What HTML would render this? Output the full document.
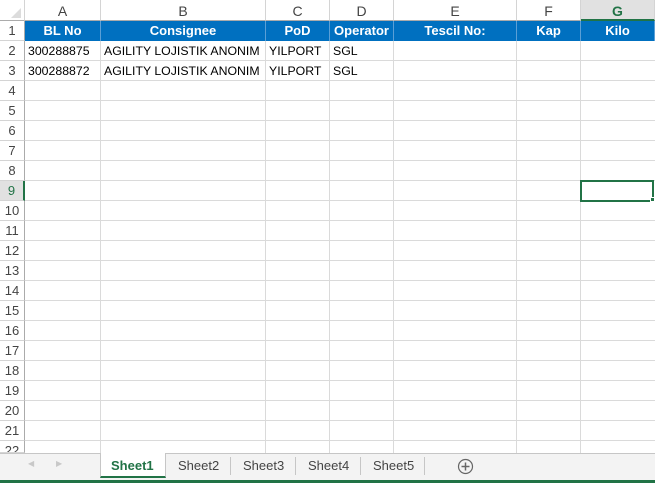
<!DOCTYPE html><html><head><style>
body{margin:0;width:655px;height:483px;overflow:hidden;background:#fff;font-family:"Liberation Sans",Arial,sans-serif;position:relative}
.a{position:absolute;box-sizing:border-box}
.ch{top:0;height:21px;background:#fff;border-right:1px solid #d4d4d4;border-bottom:1px solid #ababab;text-align:center;font-size:14px;line-height:22px;color:#444}
.rh{left:0;width:25px;height:20px;border-bottom:1px solid #d4d4d4;border-right:1px solid #ababab;text-align:center;font-size:13px;line-height:20px;color:#444}
.vl{top:21px;width:1px;height:432px;background:#dadada}
.hl{left:25px;width:630px;height:1px;background:#dadada}
.h1{top:21px;height:20px;background:#0070c0;color:#fff;font-weight:bold;font-size:13px;line-height:20px;text-align:center;border-right:1px solid #5a9fd6}
.t{font-size:12.3px;line-height:20px;color:#000;white-space:nowrap;padding-left:3px}
.tab{top:456px;font-size:13px;color:#444;line-height:20px}
</style></head><body>
<div class="a ch" style="left:0;width:25px"><svg width="10" height="10" style="position:absolute;left:11px;top:8px"><path d="M10 0V10H0Z" fill="#dcdcdc"/></svg></div>
<div class="a ch" style="left:25px;width:76px">A</div>
<div class="a ch" style="left:101px;width:165px">B</div>
<div class="a ch" style="left:266px;width:64px">C</div>
<div class="a ch" style="left:330px;width:64px">D</div>
<div class="a ch" style="left:394px;width:123px">E</div>
<div class="a ch" style="left:517px;width:64px">F</div>
<div class="a ch" style="left:581px;width:74px;background:#e1e1e1;border-bottom:2px solid #217346;color:#217346;font-weight:bold">G</div>
<div id="rows"></div>
<div class="a vl" style="left:100px"></div><div class="a vl" style="left:265px"></div><div class="a vl" style="left:329px"></div><div class="a vl" style="left:393px"></div><div class="a vl" style="left:516px"></div><div class="a vl" style="left:580px"></div>
<div class="a h1" style="left:25px;width:76px">BL No</div>
<div class="a h1" style="left:101px;width:165px">Consignee</div>
<div class="a h1" style="left:266px;width:64px">PoD</div>
<div class="a h1" style="left:330px;width:64px">Operator</div>
<div class="a h1" style="left:394px;width:123px">Tescil No:</div>
<div class="a h1" style="left:517px;width:64px">Kap</div>
<div class="a h1" style="left:581px;width:74px">Kilo</div>
<div class="a t" style="left:25px;top:41px">300288875</div><div class="a t" style="left:101px;top:41px">AGILITY LOJISTIK ANONIM</div><div class="a t" style="left:266px;top:41px">YILPORT</div><div class="a t" style="left:330px;top:41px">SGL</div>
<div class="a t" style="left:25px;top:61px">300288872</div><div class="a t" style="left:101px;top:61px">AGILITY LOJISTIK ANONIM</div><div class="a t" style="left:266px;top:61px">YILPORT</div><div class="a t" style="left:330px;top:61px">SGL</div>
<div class="a" style="left:580px;top:180px;width:74px;height:22px;border:2px solid #217346"></div>
<div class="a" style="left:650px;top:197px;width:5px;height:5px;background:#217346;border:1px solid #fff"></div>
<div class="a" style="left:0;top:453px;width:655px;height:27px;background:#f3f3f3;border-top:1px solid #c6c6c6"></div>
<div class="a" style="left:0;top:480px;width:655px;height:3px;background:#217346"></div>
<div class="a" style="left:28px;top:459px;color:#c8c8c8;font-size:8px">&#9664;</div><div class="a" style="left:56px;top:459px;color:#c8c8c8;font-size:8px">&#9654;</div>
<div class="a" style="left:100px;top:453px;width:66px;height:25px;background:#fff;border-left:1px solid #c6c6c6;border-right:1px solid #c6c6c6;border-bottom:2px solid #217346"></div>
<div class="a tab" style="left:111px;color:#217346;font-weight:bold">Sheet1</div>
<div class="a tab" style="left:178px">Sheet2</div>
<div class="a tab" style="left:243px">Sheet3</div>
<div class="a tab" style="left:308px">Sheet4</div>
<div class="a tab" style="left:373px">Sheet5</div>
<div class="a" style="left:230px;top:457px;width:1px;height:18px;background:#c6c6c6"></div>
<div class="a" style="left:295px;top:457px;width:1px;height:18px;background:#c6c6c6"></div>
<div class="a" style="left:360px;top:457px;width:1px;height:18px;background:#c6c6c6"></div>
<div class="a" style="left:424px;top:457px;width:1px;height:18px;background:#c6c6c6"></div>
<svg class="a" style="left:457px;top:458px" width="17" height="17"><circle cx="8.5" cy="8.5" r="7" fill="none" stroke="#666" stroke-width="1.2"/><path d="M8.5 4.5v8M4.5 8.5h8" stroke="#666" stroke-width="1.5"/></svg>
<script>
var h='';for(var i=1;i<=22;i++){var y=21+(i-1)*20;h+='<div class="a rh" style="top:'+y+'px;'+(i==9?'background:#e1e1e1;color:#217346;border-right:2px solid #217346;':'')+(i==22?'height:12px;line-height:20px;overflow:hidden;':'')+'">'+i+'</div>';h+='<div class="a hl" style="top:'+(y+19)+'px"></div>';}
document.getElementById('rows').innerHTML=h;
</script>
</body></html>
